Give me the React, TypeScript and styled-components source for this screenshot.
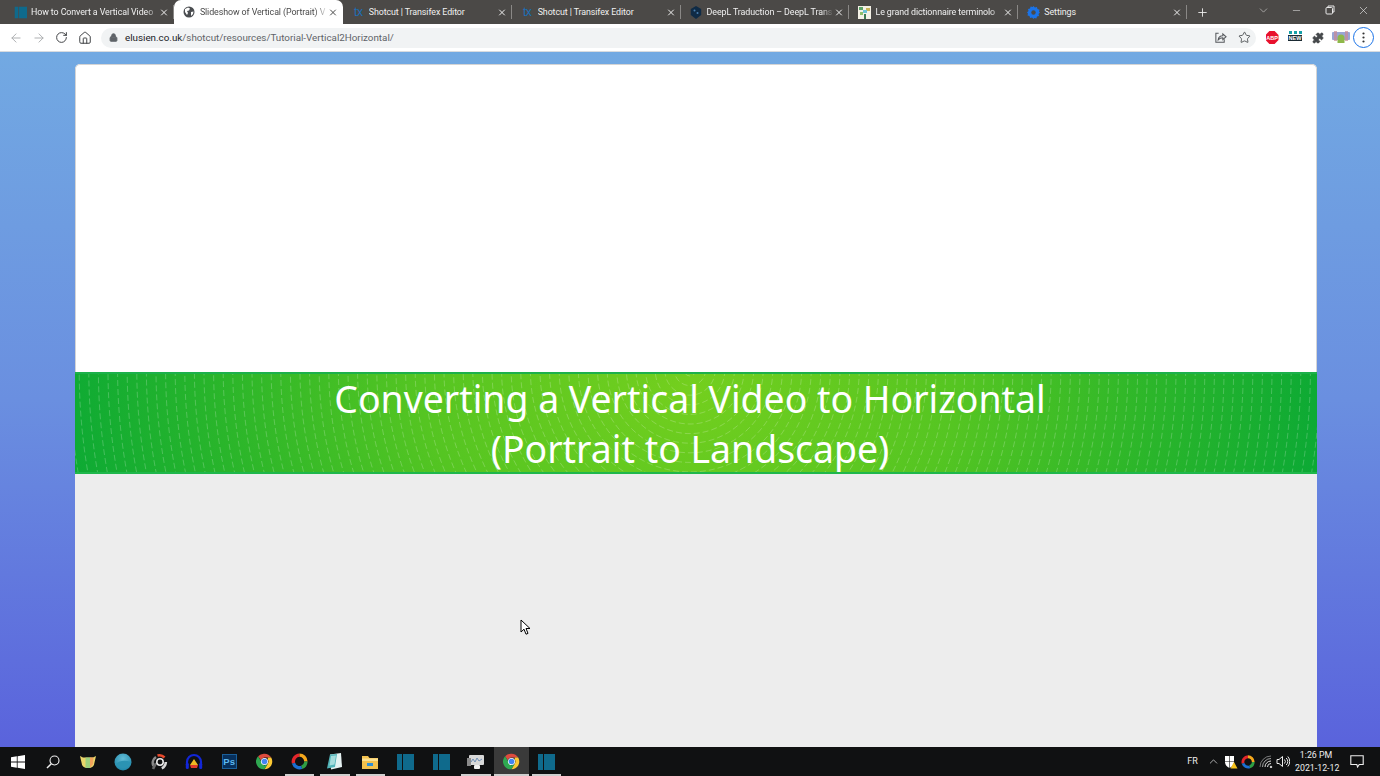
import React from "react";
import styled, { createGlobalStyle } from "styled-components";
import { ArrowLeft, ArrowRight, RotateCw, Home, Lock, Star, Puzzle, X, Plus, ChevronDown, Minus, ChevronUp } from "lucide-react";

const Global = createGlobalStyle`
  html, body { margin: 0; padding: 0; height: 100%; overflow: hidden; }
  #root { height: 100%; }
  * { box-sizing: border-box; }
`;

const Screen = styled.div`
  display: flex; flex-direction: column; width: 1380px; height: 776px;
  font-family: "Open Sans", "Noto Sans", "Liberation Sans", sans-serif; position: relative; overflow: hidden;
`;
const TabStrip = styled.div`
  display: flex; align-items: stretch; height: 24px; background: #4b4947; padding-left: 5px; flex: none; position: relative;
`;
const Tab = styled.div<{ $active?: boolean }>`
  width: 168.9px; height: 24px; display: flex; align-items: center; padding-left: 9px; padding-right: 5px; position: relative; flex: none;
  background: ${p => (p.$active ? "#fff" : "transparent")};
  color: ${p => (p.$active ? "#4a4a4a" : "#f0f0f0")};
  border-radius: 7px 7px 0 0;
  &::after {
    content: ""; position: absolute; right: 0; top: 5px; bottom: 5px; width: 1px;
    background: ${p => (p.$active ? "transparent" : "#8a8886")};
  }
`;
const TabIcon = styled.span`
  width: 13px; height: 13px; flex: none; display: flex; align-items: center; justify-content: center; margin-right: 4px; overflow: hidden;
`;
const TabTitle = styled.span<{ $fade?: boolean }>`
  flex: 1; min-width: 0; font-family: "Roboto", "Open Sans", sans-serif; font-size: 8.9px; letter-spacing: -0.1px; line-height: 12px; margin-top: -1px; white-space: nowrap; overflow: hidden;
  ${p => p.$fade ? "-webkit-mask-image: linear-gradient(to right, #000 90%, transparent 100%); mask-image: linear-gradient(to right, #000 90%, transparent 100%);" : ""}
`;
const TabClose = styled.span`
  width: 10px; height: 10px; flex: none; display: flex; align-items: center; justify-content: center; color: inherit;
`;
const NewTab = styled.div`
  width: 32px; margin-left: -1px; display: flex; align-items: center; justify-content: center; color: #f2f2f2;
`;
const WindowButtons = styled.div`
  margin-left: auto; display: flex; align-items: center; color: #e8e8e8; height: 20px;
`;
const WindowButton = styled.div`
  width: 33.3px; display: flex; justify-content: center; align-items: center;
`;
const Toolbar = styled.div`
  height: 27px; background: #fff; display: flex; align-items: center; padding: 0 0 0 4px; flex: none;
`;
const NavButton = styled.div<{ $off?: boolean }>`
  width: 23px; display: flex; justify-content: center; align-items: center;
  color: ${p => (p.$off ? "#a9abad" : "#3f4144")};
`;
const Omnibox = styled.div`
  margin-left: 5px; width: 1155px; height: 20px; border-radius: 10px; background: #f1f3f4; display: flex; align-items: center; padding: 0 0 0 8px; flex: none;
`;
const Url = styled.span`
  font-family: "Roboto", "Liberation Sans", sans-serif; font-size: 9.8px; color: #5f6368; margin-left: 7px; flex: 1; white-space: nowrap;
`;
const Host = styled.span` color: #202124; `;
const OmniAction = styled.div`
  width: 24px; display: flex; justify-content: center; align-items: center; color: #4a4c4f;
`;
const Extensions = styled.div`
  display: flex; align-items: center; padding-left: 4.5px; flex: 1;
`;
const Ext = styled.div`
  width: 23px; display: flex; justify-content: center; align-items: center; color: #44474a;
`;
const Menu = styled.div`
  width: 21px; height: 21px; border-radius: 50%; border: 1.5px solid #1a73e8; display: flex; align-items: center; justify-content: center; color: #333;
`;
const Viewport = styled.main`
  flex: 1; min-height: 0; padding: 12px 63px 0 75px; display: flex;
  background: linear-gradient(180deg, #72a9e2 0%, #6a8fe0 50%, #5a63dc 100%);
  border-top: 1px solid #d8dbdf;
`;
const Card = styled.div`
  flex: 1; display: flex; flex-direction: column; background: #ededed; border-radius: 5px 5px 0 0; overflow: hidden;
`;
const WhiteArea = styled.div`
  height: 308px; background: #fff; flex: none; border: 1px solid #d4d4d4; border-bottom: none; border-radius: 5px 5px 0 0;
`;
const Banner = styled.header`
  height: 102px; flex: none; position: relative; overflow: hidden;
  border-top: 2px solid #1cb04a; border-bottom: 2px solid #1fb74b;
  background: radial-gradient(ellipse 640px 420px at 49.5% 15%, #74cf1e 0%, #55c522 42%, #2cb62a 72%, #0ba935 100%);
`;
const BannerArt = styled.svg`
  position: absolute; inset: 0; width: 100%; height: 100%;
`;
const BannerTitle = styled.h1`
  position: relative; margin: 0; padding-right: 12px; text-align: center; color: #fff; font-family: "Noto Sans", "Open Sans", sans-serif;
  font-weight: 400; font-size: 37.4px; line-height: 50px;
`;
const GreyArea = styled.div` flex: 1; background: #ededed; `;
const CursorMark = styled.svg`
  position: absolute; left: 520px; top: 619px; width: 11px; height: 17px;
`;
const Taskbar = styled.footer`
  height: 29px; flex: none; background: #101112; display: flex; align-items: stretch; color: #eee;
`;
const TaskSlot = styled.div<{ $active?: boolean; $running?: boolean }>`
  width: 35.25px; display: flex; align-items: center; justify-content: center; position: relative; flex: none;
  background: ${p => (p.$active ? "#3a3a3a" : "transparent")};
  &::after {
    content: ""; position: absolute; left: ${p => (p.$active ? 0 : 3)}px; right: ${p => (p.$active ? 0 : 3)}px; bottom: 0; height: 2px;
    background: ${p => (p.$running ? "#cfcfcf" : "transparent")};
  }
`;
const Tray = styled.div`
  margin-left: auto; display: flex; align-items: center; font-family: "Roboto", "Open Sans", sans-serif;
`;
const Lang = styled.span` font-size: 9px; width: 20px; text-align: center; margin-right: 2px; margin-top: -2px; `;
const TrayIcon = styled.div`
  width: 17.5px; display: flex; align-items: center; justify-content: center; color: #eee;
`;
const Clock = styled.div`
  width: 42px; margin-left: 3px; text-align: center; font-size: 8.8px; line-height: 13px; white-space: nowrap;
`;
const Notify = styled.div` width: 43px; padding-right: 3px; display: flex; align-items: center; justify-content: center; `;
const TxMark = styled.span`
  font-family: "Liberation Sans", sans-serif; font-size: 12px; color: #1c6fb8; line-height: 1; letter-spacing: -0.5px;
`;
const PsText = styled.span`
  font-family: "Liberation Sans", sans-serif; font-size: 9.5px; font-weight: 700; color: #5cb8f0;
`;
const PsBox = styled.div`
  width: 15px; height: 15px; background: #07305c; border: 1px solid #1a5f9a; display: flex; align-items: center; justify-content: center;
`;
const AbpText = styled.span`
  font-family: "Liberation Sans", sans-serif; font-size: 5.5px; font-weight: 700; color: #fff;
`;
const AbpBadge = styled.div`
  width: 13px; height: 13px; background: #e8112d; display: flex; align-items: center; justify-content: center;
  clip-path: polygon(30% 0, 70% 0, 100% 30%, 100% 70%, 70% 100%, 30% 100%, 0 70%, 0 30%);
`;
const NewText = styled.span`
  font-family: "Liberation Sans", sans-serif; font-size: 5.5px; font-weight: 700; color: #fff; line-height: 6px; background: #1a2a33; padding: 0 1px; margin-top: 1px;
`;
const NewBadge = styled.div`
  display: flex; flex-direction: column; align-items: center; width: 13px; height: 13px; border-top: 3px dotted #16a0a8;
`;

const Panels = ({ s = 13 }: { s?: number }) => (
  <svg width={s} height={s} viewBox="0 0 18 18">
    <rect x="1" y="1" width="5" height="16" fill="#0f6a8c" />
    <rect x="7" y="1" width="11" height="16" fill="#0f6a8c" />
  </svg>
);
const Globe = () => (
  <svg width="12" height="12" viewBox="0 0 12 12">
    <circle cx="6" cy="6" r="5.5" fill="#4a4d50" />
    <path d="M2 3l3-1.5 2 1-1 2-2 .5 1 2-1 2L2 6zM8 6l2.5-.5L10 8 8 10z" fill="#fff" />
  </svg>
);
const Deepl = () => (
  <svg width="12" height="13" viewBox="0 0 12 13">
    <path d="M6 0l5.2 3v6L6 13 .8 9V3z" fill="#0f2b46" />
    <circle cx="4.5" cy="4.5" r="1" fill="#4a7fb0" /><circle cx="7.5" cy="7" r="1" fill="#4a7fb0" />
  </svg>
);
const Dict = () => (
  <svg width="13" height="13" viewBox="0 0 13 13">
    <rect width="13" height="13" fill="#f4f1e6" />
    <rect x="1" y="1" width="4" height="3" fill="#5aa469" /><rect x="8" y="2" width="4" height="3" fill="#c9b45a" />
    <rect x="5" y="4" width="4" height="3" fill="#6cc3d5" /><rect x="2" y="6" width="3" height="3" fill="#8fbf6b" />
    <rect x="6" y="8" width="2" height="5" fill="#3d7a4f" />
  </svg>
);
const Gear = ({ s = 13 }: { s?: number }) => (
  <svg width={s} height={s} viewBox="0 0 13 13">
    <path d="M6.5 0l1.4 1.6 2-.5.6 2 2 .6-.5 2L13 6.5l-1.5 1.4.5 2-2 .6-.6 2-2-.5L6.5 13l-1.4-1.5-2 .5-.6-2-2-.6.5-2L0 6.5l1.5-1.4-.5-2 2-.6.6-2 2 .5z" fill="#1a73e8" />
    <circle cx="6.5" cy="6.5" r="2.2" fill="#4b4947" />
  </svg>
);
const Share = () => (
  <svg width="13" height="13" viewBox="0 0 14 14" fill="none" stroke="#55585c" strokeWidth="1.1">
    <path d="M5 2.5H2v9.5h9V9" />
    <path d="M4.5 9.5c.3-3 2.4-4.5 5-4.5V3l3.5 3.2-3.5 3V7.2c-2 0-3.6.6-5 2.3z" />
  </svg>
);
const Dots = () => (
  <svg width="3" height="11" viewBox="0 0 3 11" fill="#333">
    <circle cx="1.5" cy="1.5" r="1.1" /><circle cx="1.5" cy="5.5" r="1.1" /><circle cx="1.5" cy="9.5" r="1.1" />
  </svg>
);
const Restore = () => (
  <svg width="10" height="10" viewBox="0 0 10 10" fill="none" stroke="#e8e8e8" strokeWidth="1">
    <rect x="1" y="2.5" width="6.5" height="6.5" rx="1" /><path d="M3 2.5V1h6v6H7.5" />
  </svg>
);
const Android = () => (
  <svg width="20" height="17" viewBox="0 0 20 17">
    <rect x="1" y="3" width="18" height="8" rx="1" fill="#7f8fc9" opacity=".8" />
    <rect x="3" y="2" width="3" height="10" fill="#c98a96" opacity=".7" />
    <rect x="14" y="2" width="3" height="10" fill="#c98a96" opacity=".7" />
    <path d="M6.5 9a3.5 3.5 0 0 1 7 0v5h-7z" fill="#8fb84a" />
  </svg>
);
const Chrome = () => (
  <svg width="17" height="17" viewBox="0 0 24 24">
    <path d="M12 1a11 11 0 0 1 9.5 5.5H12a5.5 5.5 0 0 0-5.2 3.6L3 4.6A11 11 0 0 1 12 1z" fill="#dd4b3e" />
    <path d="M21.5 6.5A11 11 0 0 1 12 23l4.7-8.2A5.5 5.5 0 0 0 16.7 9l-.1-2.5z" fill="#fcc934" />
    <path d="M3 4.6l4.7 8.2A5.5 5.5 0 0 0 12 17.5l4.7-2.7L12 23A11 11 0 0 1 3 4.6z" fill="#2fa851" />
    <circle cx="12" cy="12" r="5" fill="#fff" /><circle cx="12" cy="12" r="4" fill="#4285f4" />
  </svg>
);
const Ring = ({ s = 17 }: { s?: number }) => (
  <svg width={s} height={s} viewBox="0 0 20 20" fill="none" strokeWidth="4">
    <circle cx="10" cy="10" r="10" fill="#111" stroke="none" />
    <path d="M3 12a7.5 7.5 0 0 1 7-9.5" stroke="#e3262b" />
    <path d="M10 2.5a7.5 7.5 0 0 1 7.5 7.5" stroke="#f5a81c" />
    <path d="M17.5 10a7.5 7.5 0 0 1-5 7" stroke="#2f9e44" />
    <path d="M12.5 17a7.5 7.5 0 0 1-9.5-5" stroke="#1b6fd1" />
  </svg>
);

const tabs: { title: string; icon: React.ReactNode; active?: boolean; fade?: boolean }[] = [
  { title: "How to Convert a Vertical Video", icon: <Panels />, fade: true },
  { title: "Slideshow of Vertical (Portrait) V", icon: <Globe />, active: true, fade: true },
  { title: "Shotcut | Transifex Editor", icon: <TxMark>tx</TxMark> },
  { title: "Shotcut | Transifex Editor", icon: <TxMark>tx</TxMark> },
  { title: "DeepL Traduction – DeepL Trans", icon: <Deepl />, fade: true },
  { title: "Le grand dictionnaire terminolo", icon: <Dict />, fade: true },
  { title: "Settings", icon: <Gear /> },
];

const apps: { icon: React.ReactNode; running?: boolean; active?: boolean }[] = [
  { icon: <svg width="14" height="14" viewBox="0 0 14 14" fill="#fff"><path d="M0 2.2l5.8-.9v5.3H0zM6.6 1.2L14 0v6.6H6.6zM0 7.4h5.8v5.3L0 11.8zM6.6 7.4H14V14l-7.4-1.2z" /></svg> },
  { icon: <svg width="14" height="14" viewBox="0 0 14 14" fill="none" stroke="#eee" strokeWidth="1.1"><circle cx="8.5" cy="5.5" r="4.5" /><path d="M5.3 8.7L1 13" strokeWidth="1.5" /></svg> },
  { icon: <svg width="16" height="13" viewBox="0 0 16 13"><path d="M0 1l3 1.5h10L16 1l-1.5 6.5A6 6 0 0 1 9 13H7a6 6 0 0 1-5.5-5.5z" fill="#e9d56a" /><path d="M5.5 2.5h5V13h-5z" fill="#9ccf7d" /><path d="M10 2.5h3.5L13 9l-3 4z" fill="#f2a45c" /></svg> },
  { icon: <svg width="18" height="18" viewBox="0 0 18 18"><defs><radialGradient id="orb" cx="50%" cy="30%" r="70%"><stop offset="0" stopColor="#62bcd6" /><stop offset="1" stopColor="#1e86a8" /></radialGradient></defs><circle cx="9" cy="9" r="8.5" fill="url(#orb)" /><path d="M2 11c4-4 9-4 15-2a8.5 8.5 0 0 1-15 2z" fill="#2b93b3" /></svg> },
  { icon: <svg width="18" height="18" viewBox="0 0 18 18" fill="none" strokeWidth="2.6"><path d="M14.5 4.5a7 7 0 0 0-7-2" stroke="#e94a2c" /><path d="M15.8 9a7 7 0 0 1-4 6.3" stroke="#d8d8d8" /><path d="M6 4a7 7 0 0 0-2.5 9" stroke="#8a8a8a" /><path d="M3 16l3-6" stroke="#6a6a6a" /><circle cx="10" cy="9" r="3.2" stroke="#e8e8e8" strokeWidth="1.6" /></svg> },
  { icon: <svg width="18" height="18" viewBox="0 0 18 18" fill="none"><path d="M2 12V9a7 7 0 0 1 14 0v3" stroke="#1226d6" strokeWidth="2.2" /><rect x=".8" y="10" width="3" height="6" rx="1.3" fill="#1226d6" /><rect x="14.2" y="10" width="3" height="6" rx="1.3" fill="#1226d6" /><path d="M9 6l4 6H5z" fill="#f0b822" /><path d="M5 12h8l-1 3H6z" fill="#e23b2a" /></svg> },
  { icon: <PsBox><PsText>Ps</PsText></PsBox> },
  { icon: <Chrome /> },
  { icon: <Ring />, running: true },
  { icon: <svg width="17" height="17" viewBox="0 0 17 17"><path d="M4 1.5L15 0l1 14-11 2.5z" fill="#e6f2f2" /><path d="M4 1.5L11 1 9 14 1 15.5z" fill="#52b3b8" /><path d="M5 3l5-.5-1.5 9-5 1z" fill="#a6dcdc" /></svg>, running: true },
  { icon: <svg width="16" height="14" viewBox="0 0 16 14"><path d="M0 1h6l1.5 2H16v11H0z" fill="#f2c14e" /><rect y="3.5" width="16" height="2.5" fill="#fbe08f" /><rect x="5" y="8" width="6" height="3" fill="#2f8fd6" /></svg>, running: true },
  { icon: <Panels s={18} /> },
  { icon: <Panels s={18} /> },
  { icon: <svg width="17" height="16" viewBox="0 0 17 16"><rect x="2" y="1" width="15" height="10" rx="1" fill="#d8d8d8" /><rect x="0" y="4" width="4" height="8" fill="#8a8a8a" /><path d="M4 8l2-3 2 3 2-4 2 3 3-2" stroke="#6f8fb5" strokeWidth="1" fill="none" /><rect x="7" y="11" width="6" height="4" rx="1" fill="#f0f0f0" /></svg>, running: true },
  { icon: <Chrome />, running: true, active: true },
  { icon: <Panels s={18} />, running: true },
];

const rings = Array.from({ length: 70 }, (_, i) => 6 + i * 9.6);

export default function App() {
  return (
    <Screen>
      <Global />
      <TabStrip>
        {tabs.map((t, i) => (
          <Tab key={i} $active={t.active}>
            <TabIcon>{t.icon}</TabIcon>
            <TabTitle $fade={t.fade}>{t.title}</TabTitle>
            <TabClose><X size={11} strokeWidth={2.4} /></TabClose>
          </Tab>
        ))}
        <NewTab><Plus size={13} strokeWidth={1.6} /></NewTab>
        <WindowButtons>
          <WindowButton><ChevronDown size={13} strokeWidth={1} /></WindowButton>
          <WindowButton><Minus size={11} strokeWidth={1.2} /></WindowButton>
          <WindowButton><Restore /></WindowButton>
          <WindowButton><X size={13} strokeWidth={1.2} /></WindowButton>
        </WindowButtons>
      </TabStrip>
      <Toolbar>
        <NavButton $off><ArrowLeft size={14} strokeWidth={1.6} /></NavButton>
        <NavButton $off><ArrowRight size={14} strokeWidth={1.6} /></NavButton>
        <NavButton><RotateCw size={13} strokeWidth={1.8} /></NavButton>
        <NavButton><Home size={14} strokeWidth={1.7} /></NavButton>
        <Omnibox>
          <Lock size={9} strokeWidth={2.6} color="#5f6368" fill="#5f6368" />
          <Url><Host>elusien.co.uk</Host>/shotcut/resources/Tutorial-Vertical2Horizontal/</Url>
          <OmniAction><Share /></OmniAction>
          <OmniAction><Star size={13} strokeWidth={1.5} color="#3c4043" /></OmniAction>
        </Omnibox>
        <Extensions>
          <Ext><AbpBadge><AbpText>ABP</AbpText></AbpBadge></Ext>
          <Ext><NewBadge><NewText>NEW</NewText></NewBadge></Ext>
          <Ext><Puzzle size={12} strokeWidth={1.5} fill="#44474a" /></Ext>
          <Ext><Android /></Ext>
          <Menu><Dots /></Menu>
        </Extensions>
      </Toolbar>
      <Viewport>
        <Card>
          <WhiteArea />
          <Banner>
            <BannerArt viewBox="0 0 1242 98" preserveAspectRatio="none" aria-hidden="true">
              {rings.map(r => (
                <circle key={r} cx="615" cy="-4" r={r} fill="none" stroke="#fff" strokeOpacity="0.24" strokeWidth="0.9" strokeDasharray="6 3" />
              ))}
            </BannerArt>
            <BannerTitle>Converting a Vertical Video to Horizontal<br />(Portrait to Landscape)</BannerTitle>
          </Banner>
          <GreyArea />
        </Card>
      </Viewport>
      <Taskbar>
        {apps.map((a, i) => (
          <TaskSlot key={i} $running={a.running} $active={a.active}>{a.icon}</TaskSlot>
        ))}
        <Tray>
          <Lang>FR</Lang>
          <TrayIcon><ChevronUp size={13} strokeWidth={1.3} /></TrayIcon>
          <TrayIcon>
            <svg width="14" height="14" viewBox="0 0 14 14"><path d="M1 1h9v6c0 3-2 5-4.5 6C3 12 1 10 1 7z" fill="#fff" /><path d="M5.2 1h.6v12h-.6zM1 6h9v.6H1z" fill="#101112" /><path d="M10 7l3.5 6.5h-7z" fill="#f6c21c" /></svg>
          </TrayIcon>
          <TrayIcon><Ring s={14} /></TrayIcon>
          <TrayIcon>
            <svg width="14" height="13" viewBox="0 0 14 13" fill="none" stroke="#ddd" strokeWidth="1"><path d="M1 12a11 11 0 0 1 11-11" strokeOpacity=".5" /><path d="M3.5 12A8.5 8.5 0 0 1 12 3.5" strokeOpacity=".7" /><path d="M6 12a6 6 0 0 1 6-6" /><path d="M8.5 12A3.5 3.5 0 0 1 12 8.5" /><circle cx="12" cy="12" r=".8" fill="#ddd" /></svg>
          </TrayIcon>
          <TrayIcon>
            <svg width="14" height="13" viewBox="0 0 14 13" fill="none" stroke="#eee" strokeWidth="1"><path d="M1 4.5h2L6.5 1.5v10L3 8.5H1z" /><path d="M8.5 4.5a3 3 0 0 1 0 4M10.2 3a5.2 5.2 0 0 1 0 7M11.8 1.5a7.5 7.5 0 0 1 0 10" /></svg>
          </TrayIcon>
          <Clock>1:26 PM<br />2021-12-12</Clock>
          <Notify>
            <svg width="14" height="13" viewBox="0 0 14 13" fill="none" stroke="#eee" strokeWidth="1.1"><path d="M.8.8h12.4v8.7H9.2L7.6 12 6.8 9.5H.8z" /></svg>
          </Notify>
        </Tray>
      </Taskbar>
      <CursorMark viewBox="0 0 11 17" aria-hidden="true">
        <path d="M1 1v12l3-2.8 2 5 2-.8-2-4.9h4z" fill="#fff" stroke="#000" strokeWidth="1" />
      </CursorMark>
    </Screen>
  );
}
